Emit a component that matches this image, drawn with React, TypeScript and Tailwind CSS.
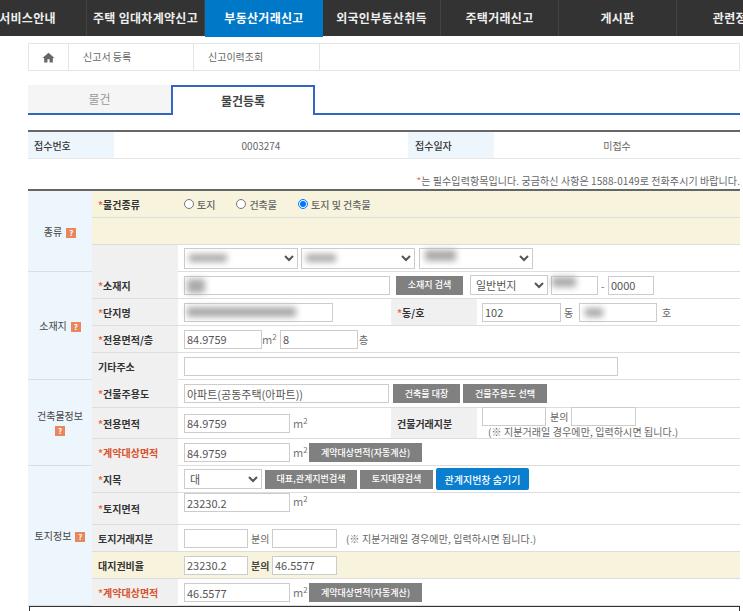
import React from "react";

const FONT = { fontFamily: '"Noto Sans CJK KR", "Noto Sans", sans-serif' };

function Field({ value = "", blur, className }: { value?: string; blur?: string; className: string }) {
  return (
    <div className={`relative shrink-0 ${className}`}>
      <input
        readOnly
        value={value}
        className="block h-full w-full border border-[#ccc] bg-white px-[2px] text-[11px] text-[#555] outline-none"
      />
      {blur ? <span className={`absolute bg-[#aaa] blur-[3px] ${blur}`} /> : null}
    </div>
  );
}

function Select({ value, blur, className }: { value?: string; blur?: string; className: string }) {
  return (
    <div className={`relative shrink-0 ${className}`}>
      <select className="block h-full w-full border border-[#ccc] bg-white pl-[1px] text-[11px] text-[#555] outline-none">
        <option>{value ?? ""}</option>
      </select>
      {blur ? <span className={`absolute bg-[#aaa] blur-[3px] ${blur}`} /> : null}
    </div>
  );
}

function Btn({ children, className }: { children: React.ReactNode; className: string }) {
  return (
    <button className={`flex shrink-0 items-center justify-center bg-[#808080] text-[9px] font-medium text-white ${className}`}>
      {children}
    </button>
  );
}

function Help({ className = "ml-[4px]" }: { className?: string }) {
  return (
    <span className={`inline-flex h-[10px] w-[10px] items-center justify-center bg-[#e8865c] text-[8px] font-bold leading-none text-white ${className}`}>
      ?
    </span>
  );
}

function Req({ children, red }: { children: React.ReactNode; red?: boolean }) {
  return (
    <span className={red ? "text-[#d9502c]" : ""}>
      <span className="text-[#e8704a]">*</span>
      {children}
    </span>
  );
}

function Label({ children, bg = "bg-[#f0f0f0]", className = "" }: { children?: React.ReactNode; bg?: string; className?: string }) {
  return (
    <div className={`flex w-[86px] shrink-0 items-center self-stretch pl-[6px] text-[10px] font-bold text-[#333] ${bg} ${className}`}>
      {children}
    </div>
  );
}

function Row({ h, children, bg }: { h: string; children: React.ReactNode; bg?: string }) {
  return <div className={`flex items-stretch border-b border-[#ddd] ${h} ${bg ?? ""}`}>{children}</div>;
}

function Value({ children, className = "" }: { children?: React.ReactNode; className?: string }) {
  return <div className={`flex min-w-0 flex-1 items-center pl-[6px] text-[10px] text-[#666] ${className}`}>{children}</div>;
}

function M2({ className = "ml-[3px] w-[16px]" }: { className?: string }) {
  return (
    <span className={`shrink-0 text-[11px] text-[#777] ${className}`}>
      m<sup className="text-[8px]">2</sup>
    </span>
  );
}

function Section({ title, children, h }: { title: React.ReactNode; children: React.ReactNode; h: string }) {
  return (
    <div className={`flex border-b border-[#ddd] ${h}`}>
      <div className="flex w-[64px] shrink-0 items-center justify-center bg-[#eef6fd] text-center text-[10px] text-[#444]">
        {title}
      </div>
      <div className="min-w-0 flex-1 [&>*:last-child]:border-b-0">{children}</div>
    </div>
  );
}

const NAV = ["서비스안내", "주택 임대차계약신고", "부동산거래신고", "외국인부동산취득", "주택거래신고", "게시판", "관련정보"];

export default function App() {
  return (
    <div className="h-[611px] w-[743px] overflow-hidden bg-white" style={FONT}>
      <nav className="ml-[-31px] flex h-[36px] w-[860px] bg-[#333]">
        {NAV.map((n, i) => (
          <div
            key={n}
            className={`flex w-[118px] shrink-0 items-center justify-center pb-[1px] text-[12px] font-bold tracking-[0.3px] ${
              i === 2 ? "h-[37px] bg-[#0078c8] text-white" : "border-r border-[#444] text-[#eee]"
            }`}
          >
            {n}
          </div>
        ))}
      </nav>

      <main className="ml-[28px] w-[712px]">
        <div className="mt-[7px] flex h-[28px] border border-[#e5e5e5] text-[10px] text-[#666]">
          <div className="flex w-[40px] items-center justify-center border-r border-[#e5e5e5]">
            <svg viewBox="0 0 24 24" className="h-[13px] w-[13px] fill-[#666]">
              <path d="M12 3 1 13h3v8h6v-6h4v6h6v-8h3z" />
            </svg>
          </div>
          <div className="flex w-[125px] items-center border-r border-[#e5e5e5] pb-[2px] pl-[14px]">신고서 등록</div>
          <div className="flex w-[126px] items-center border-r border-[#e5e5e5] pb-[2px] pl-[14px]">신고이력조회</div>
        </div>

        <div className="mt-[14px] flex h-[30px] text-[12px]">
          <div className="flex w-[143px] items-center justify-center border-b-2 border-[#3366c4] bg-[#f5f5f5] text-[#999]">물건</div>
          <div className="flex w-[144px] items-center justify-center border-x-2 border-t-2 border-[#3366c4] font-bold text-[#444]">물건등록</div>
          <div className="flex-1 border-b-2 border-[#3366c4]" />
        </div>

        <div className="mt-[15px] flex h-[29px] border-t-2 border-b border-t-[#666] border-b-[#e5e5e5] text-[10px]">
          <div className="flex w-[86px] items-center bg-[#eef6fd] pl-[6px] font-medium text-[#333]">접수번호</div>
          <div className="flex w-[294px] items-center justify-center text-[#666]">0003274</div>
          <div className="flex w-[86px] items-center bg-[#eef6fd] pl-[7px] font-medium text-[#333]">접수일자</div>
          <div className="flex flex-1 items-center justify-center text-[#666]">미접수</div>
        </div>

        <p className="mt-[13px] h-[17px] whitespace-nowrap text-right text-[10px] leading-[17px] tracking-[0.08px] text-[#666]">
          <span className="text-[#e8704a]">*</span>는 필수입력항목입니다. 궁금하신 사항은 1588-0149로 전화주시기 바랍니다.
        </p>

        <div className="border-t-2 border-[#666]">
          <Section h="h-[81px]" title={<span>종류<Help /></span>}>
            <Row h="h-[27px]" bg="bg-[#f7f3dc]">
              <Label bg="bg-[#f7f3dc]"><Req>물건종류</Req></Label>
              <Value className="font-medium text-[#333]">
                <input type="radio" name="k" className="h-[10px] w-[10px] shrink-0" />
                <span className="ml-[3px]">토지</span>
                <input type="radio" name="k" className="ml-[21px] h-[10px] w-[10px] shrink-0" />
                <span className="ml-[3px]">건축물</span>
                <input type="radio" name="k" defaultChecked className="ml-[21px] h-[10px] w-[10px] shrink-0" />
                <span className="ml-[3px]">토지 및 건축물</span>
              </Value>
            </Row>
            <Row h="h-[27px]" bg="bg-[#f7f3dc]">
              <Label bg="bg-[#f7f3dc]" />
              <Value />
            </Row>
            <Row h="h-[27px]">
              <Label />
              <Value className="pl-[5px]">
                <Select className="h-[21px] w-[114px]" blur="left-[5px] top-[6px] h-[8px] w-[38px]" />
                <Select className="ml-[3px] h-[21px] w-[114px]" blur="left-[5px] top-[6px] h-[8px] w-[30px]" />
                <Select className="ml-[4px] h-[21px] w-[114px]" blur="left-[6px] top-[2px] h-[11px] w-[31px]" />
              </Value>
            </Row>
          </Section>

          <Section h="h-[108px]" title={<span>소재지<Help /></span>}>
            <Row h="h-[27px]">
              <Label><Req>소재지</Req></Label>
              <Value>
                <Field className="h-[19px] w-[206px]" blur="left-[3px] top-[3px] h-[14px] w-[18px]" />
                <Btn className="ml-[6px] h-[19px] w-[67px]">소재지 검색</Btn>
                <Select value="일반번지" className="ml-[7px] h-[20px] w-[78px]" />
                <Field className="ml-[3px] h-[19px] w-[47px]" blur="left-[1px] top-[1px] h-[10px] w-[24px]" />
                <span className="ml-[3px] w-[7px]">-</span>
                <Field value="0000" className="h-[19px] w-[46px]" />
              </Value>
            </Row>
            <Row h="h-[27px]">
              <Label><Req>단지명</Req></Label>
              <Value>
                <Field className="h-[19px] w-[149px]" blur="left-[3px] top-[4px] h-[10px] w-[109px]" />
                <Label className="ml-[58px]"><Req>동/호</Req></Label>
                <Field value="102" className="ml-[5px] h-[19px] w-[79px]" />
                <span className="ml-[3px] w-[15px]">동</span>
                <Field className="h-[19px] w-[78px]" blur="left-[6px] top-[5px] h-[9px] w-[18px]" />
                <span className="ml-[5px]">호</span>
              </Value>
            </Row>
            <Row h="h-[27px]">
              <Label><Req>전용면적/층</Req></Label>
              <Value>
                <Field value="84.9759" className="h-[19px] w-[78px]" />
                <M2 className="w-[18px]" />
                <Field value="8" className="h-[19px] w-[78px]" />
                <span className="ml-[1px]">층</span>
              </Value>
            </Row>
            <Row h="h-[27px]">
              <Label>기타주소</Label>
              <Value>
                <Field className="h-[19px] w-[434px]" />
              </Value>
            </Row>
          </Section>

          <Section
            h="h-[86px]"
            title={
              <span className="leading-[14px]">
                건축물정보
                <br />
                <Help className="" />
              </span>
            }
          >
            <Row h="h-[28px]">
              <Label><Req>건물주용도</Req></Label>
              <Value>
                <Field value="아파트(공동주택(아파트))" className="h-[19px] w-[205px]" />
                <Btn className="ml-[4px] h-[19px] w-[67px]">건축물 대장</Btn>
                <Btn className="ml-[3px] h-[19px] w-[84px]">건물주용도 선택</Btn>
              </Value>
            </Row>
            <Row h="h-[31px]">
              <Label><Req>전용면적</Req></Label>
              <Value>
                <Field value="84.9759" className="h-[19px] w-[106px]" />
                <M2 />
                <Label className="ml-[82px]">건물거래지분</Label>
                <div className="ml-[5px] mt-[-1px] self-start">
                  <div className="flex items-center">
                    <Field className="h-[19px] w-[64px]" />
                    <span className="ml-[4px] w-[21px]">분의</span>
                    <Field className="h-[19px] w-[65px]" />
                  </div>
                  <p className="ml-[6px] whitespace-nowrap text-[10px] leading-[12px] tracking-[0.1px]">(※ 지분거래일 경우에만, 입력하시면 됩니다.)</p>
                </div>
              </Value>
            </Row>
            <Row h="h-[27px]">
              <Label><span className="text-[#d9502c]"><Req>계약대상면적</Req></span></Label>
              <Value>
                <Field value="84.9759" className="h-[19px] w-[106px]" />
                <M2 />
                <Btn className="h-[19px] w-[113px]">계약대상면적(자동계산)</Btn>
              </Value>
            </Row>
          </Section>

          <Section h="h-[140px]" title={<span>토지정보<Help /></span>}>
            <Row h="h-[27px]">
              <Label><Req>지목</Req></Label>
              <Value>
                <Select value="대" className="h-[20px] w-[78px]" />
                <Btn className="ml-[3px] h-[19px] w-[92px]">대표,관계지번검색</Btn>
                <Btn className="ml-[3px] h-[19px] w-[73px]">토지대장검색</Btn>
                <button className="ml-[3px] flex h-[22px] w-[93px] shrink-0 items-center justify-center rounded-[2px] bg-[#0a7fd0] text-[10px] font-medium text-white">
                  관계지번창 숨기기
                </button>
              </Value>
            </Row>
            <Row h="h-[32px]">
              <Label><Req>토지면적</Req></Label>
              <Value className="items-start">
                <Field value="23230.2" className="h-[19px] w-[106px]" />
                <M2 />
              </Value>
            </Row>
            <Row h="h-[27px]">
              <Label>토지거래지분</Label>
              <Value>
                <Field className="h-[19px] w-[64px]" />
                <span className="ml-[3px] w-[21px]">분의</span>
                <Field className="h-[19px] w-[65px]" />
                <span className="ml-[9px] whitespace-nowrap text-[10px] tracking-[0.1px]">(※ 지분거래일 경우에만, 입력하시면 됩니다.)</span>
              </Value>
            </Row>
            <Row h="h-[27px]" bg="bg-[#f7f3dc]">
              <Label bg="bg-[#f7f3dc]">대지권비율</Label>
              <Value>
                <Field value="23230.2" className="h-[19px] w-[64px]" />
                <span className="ml-[3px] w-[21px] font-bold text-[#444]">분의</span>
                <Field value="46.5577" className="h-[19px] w-[65px]" />
              </Value>
            </Row>
            <Row h="h-[27px]">
              <Label><span className="text-[#d9502c]"><Req>계약대상면적</Req></span></Label>
              <Value>
                <Field value="46.5577" className="h-[19px] w-[106px]" />
                <M2 />
                <Btn className="h-[19px] w-[113px]">계약대상면적(자동계산)</Btn>
              </Value>
            </Row>
          </Section>
        </div>

        <div className="ml-[1px] h-[40px] border border-[#333] bg-white" />
      </main>
    </div>
  );
}
